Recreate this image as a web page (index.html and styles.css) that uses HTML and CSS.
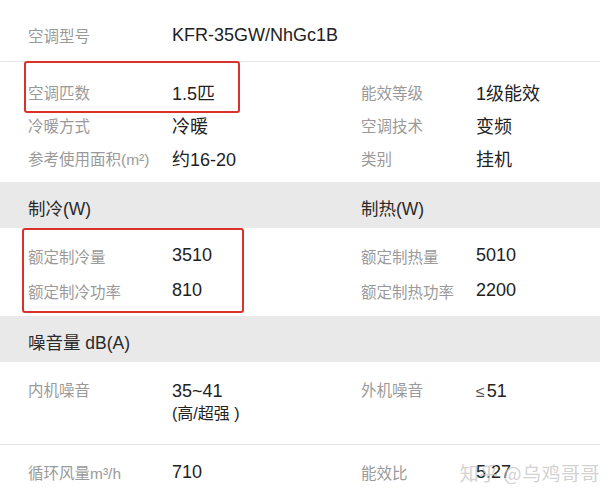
FILE: index.html
```html
<!DOCTYPE html>
<html lang="zh">
<head>
<meta charset="utf-8">
<link rel="stylesheet" href="styles.css">
</head>
<body>
<div class="sheet">
  <div class="sec sec-model">
    <div class="row">
      <span class="lbl">空调型号</span><span class="val">KFR-35GW/NhGc1B</span>
    </div>
  </div>

  <div class="sec sec-basic">
    <div class="row">
      <span class="lbl">空调匹数</span><span class="val">1.5匹</span>
      <span class="lbl">能效等级</span><span class="val">1级能效</span>
    </div>
    <div class="row">
      <span class="lbl">冷暖方式</span><span class="val">冷暖</span>
      <span class="lbl">空调技术</span><span class="val">变频</span>
    </div>
    <div class="row">
      <span class="lbl">参考使用面积(m²)</span><span class="val">约16-20</span>
      <span class="lbl">类别</span><span class="val">挂机</span>
    </div>
    <div class="mark mark-1"></div>
  </div>

  <div class="band">
    <span class="head">制冷(W)</span>
    <span class="head">制热(W)</span>
  </div>

  <div class="sec sec-power">
    <div class="row">
      <span class="lbl">额定制冷量</span><span class="val">3510</span>
      <span class="lbl">额定制热量</span><span class="val">5010</span>
    </div>
    <div class="row">
      <span class="lbl">额定制冷功率</span><span class="val">810</span>
      <span class="lbl">额定制热功率</span><span class="val">2200</span>
    </div>
    <div class="mark mark-2"></div>
  </div>

  <div class="band">
    <span class="head">噪音量 dB(A)</span>
  </div>

  <div class="sec sec-noise">
    <div class="row">
      <span class="lbl">内机噪音</span><span class="val">35~41<br><span class="sub">(高/超强 )</span></span>
      <span class="lbl">外机噪音</span><span class="val"><span class="le">≤</span>51</span>
    </div>
  </div>

  <div class="sec sec-air">
    <div class="row">
      <span class="lbl">循环风量m³/h</span><span class="val">710</span>
      <span class="lbl">能效比</span><span class="val">5.27</span>
    </div>
    <div class="watermark">知乎 @乌鸡哥哥</div>
  </div>
</div>
</body>
</html>
```

FILE: styles.css
```css
html, body {
  margin: 0;
  padding: 0;
  background: #ffffff;
}

body {
  font-family: "Liberation Sans", "Noto Sans CJK SC", sans-serif;
  color: #222222;
}

.sheet {
  width: 600px;
}

.sec {
  position: relative;
  border-bottom: 1px solid #e4e4e4;
}

.row {
  display: grid;
  grid-template-columns: 144px 189px 115px 1fr;
  align-items: center;
  padding-left: 28px;
}

.lbl {
  font-size: 15.5px;
  color: #9a9a9a;
  white-space: nowrap;
}

.val {
  font-size: 18px;
  color: #222222;
  white-space: nowrap;
}

.sub {
  font-size: 16px;
  line-height: 22px;
}

.le {
  color: #555555;
  font-size: 16px;
  margin-right: 2px;
}

.sec-model {
  padding: 24px 0 15px;
}
.sec-model .row {
  height: 22px;
}

.sec-basic {
  border-bottom: none;
  padding: 13px 0 8px;
}
.sec-basic .row {
  height: 33px;
}

.band {
  display: grid;
  grid-template-columns: 333px 1fr;
  align-items: center;
  height: 46px;
  padding: 5px 0 0 28px;
  background: #e9e9e9;
  box-sizing: border-box;
}

.head {
  font-size: 17.5px;
  color: #2a2a2a;
}

.sec-power {
  border-bottom: none;
  padding: 10px 0 8px;
}
.sec-power .row {
  height: 35px;
}

.sec-noise {
  padding: 18px 0 19px;
}
.sec-noise .row {
  align-items: start;
}
.sec-noise .lbl,
.sec-noise .val {
  line-height: 22px;
}

.sec-air {
  padding: 16px 0 16px;
}
.sec-air .row {
  height: 22px;
}

.mark {
  position: absolute;
  border: 2px solid #d8322b;
  border-radius: 3px;
  box-sizing: border-box;
}
.mark-1 {
  left: 24px;
  top: -1px;
  width: 216px;
  height: 52px;
}
.mark-2 {
  left: 22px;
  top: 0;
  width: 222px;
  height: 85px;
}

.watermark {
  position: absolute;
  right: 0;
  top: 14px;
  font-family: "Noto Sans CJK SC", sans-serif;
  font-size: 19px;
  color: rgba(195, 195, 195, 0.75);
  letter-spacing: 0.5px;
}
```
